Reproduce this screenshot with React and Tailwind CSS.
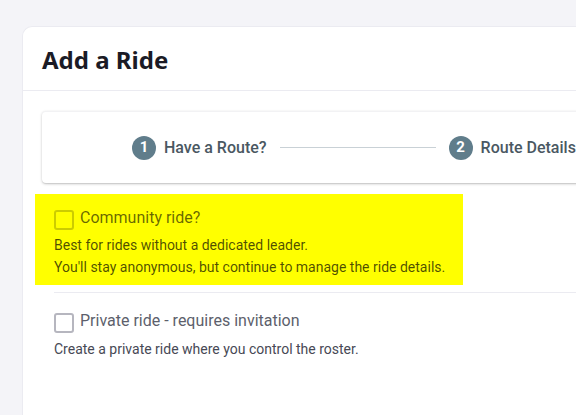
import React from "react";

function Step({ n, label }) {
  return (
    <div className="flex items-center gap-[8px]">
      <div className="w-[24px] h-[24px] rounded-full bg-[#607d8b] text-white flex items-center justify-center text-[15px] font-bold">
        {n}
      </div>
      <span className="text-[16px] font-medium text-[#4a5862] whitespace-nowrap">{label}</span>
    </div>
  );
}

export default function App() {
  return (
    <div className="w-[576px] h-[415px] overflow-hidden bg-[#f4f4f8] pt-[26px] pl-[22px]" style={{ fontFamily: "Roboto, 'Liberation Sans', sans-serif" }}>
      <div className="w-[620px] h-[420px] bg-white rounded-tl-[10px] border-l border-t border-[#ebebf1]">
        <div className="h-[64px] flex items-center px-[19px] border-b border-[#ebebf1]">
          <h1 className="text-[24px] font-bold text-[#1b1b26] mt-[3px]" style={{ fontFamily: "'Noto Sans', Inter, sans-serif" }}>
            Add a Ride
          </h1>
        </div>
        <div className="pt-[20px]">
          <div className="ml-[19px] h-[72px] bg-white rounded-[4px] shadow-[0_1px_3px_rgba(0,0,0,0.2),0_1px_1px_rgba(0,0,0,0.08)] border-t border-[#f2f2f4] flex items-center pl-[90px] gap-[13px]">
            <Step n="1" label="Have a Route?" />
            <div className="w-[156px] h-px bg-[#c9d1d6]" />
            <Step n="2" label="Route Details" />
          </div>
          <div className="ml-[12px] mt-[11px] w-[428px] h-[91px] bg-[#ffff00] pl-[19px] pt-[16px]">
            <div className="flex items-center gap-[6px]">
              <div className="w-[20px] h-[20px] rounded-[3px] border-2 border-black/20" />
              <span className="text-[16px] text-black/60 -mt-[5px]">Community ride?</span>
            </div>
            <div className="mt-[4px] text-[14px] leading-[22px] text-black/70">
              <div>Best for rides without a dedicated leader.</div>
              <div>You'll stay anonymous, but continue to manage the ride details.</div>
            </div>
          </div>
          <div className="ml-[31px] mt-[7px] h-px bg-[#ebebf1]" />
          <div className="pl-[31px] pt-[20px]">
            <div className="flex items-center gap-[6px]">
              <div className="w-[20px] h-[20px] rounded-[3px] border-2 border-[#b6b6bf]" />
              <span className="text-[16px] text-[#5d5f6c] -mt-[5px]">Private ride - requires invitation</span>
            </div>
            <div className="mt-[5px] text-[14px] leading-[22px] text-[#474955]">
              Create a private ride where you control the roster.
            </div>
          </div>
        </div>
      </div>
    </div>
  );
}
